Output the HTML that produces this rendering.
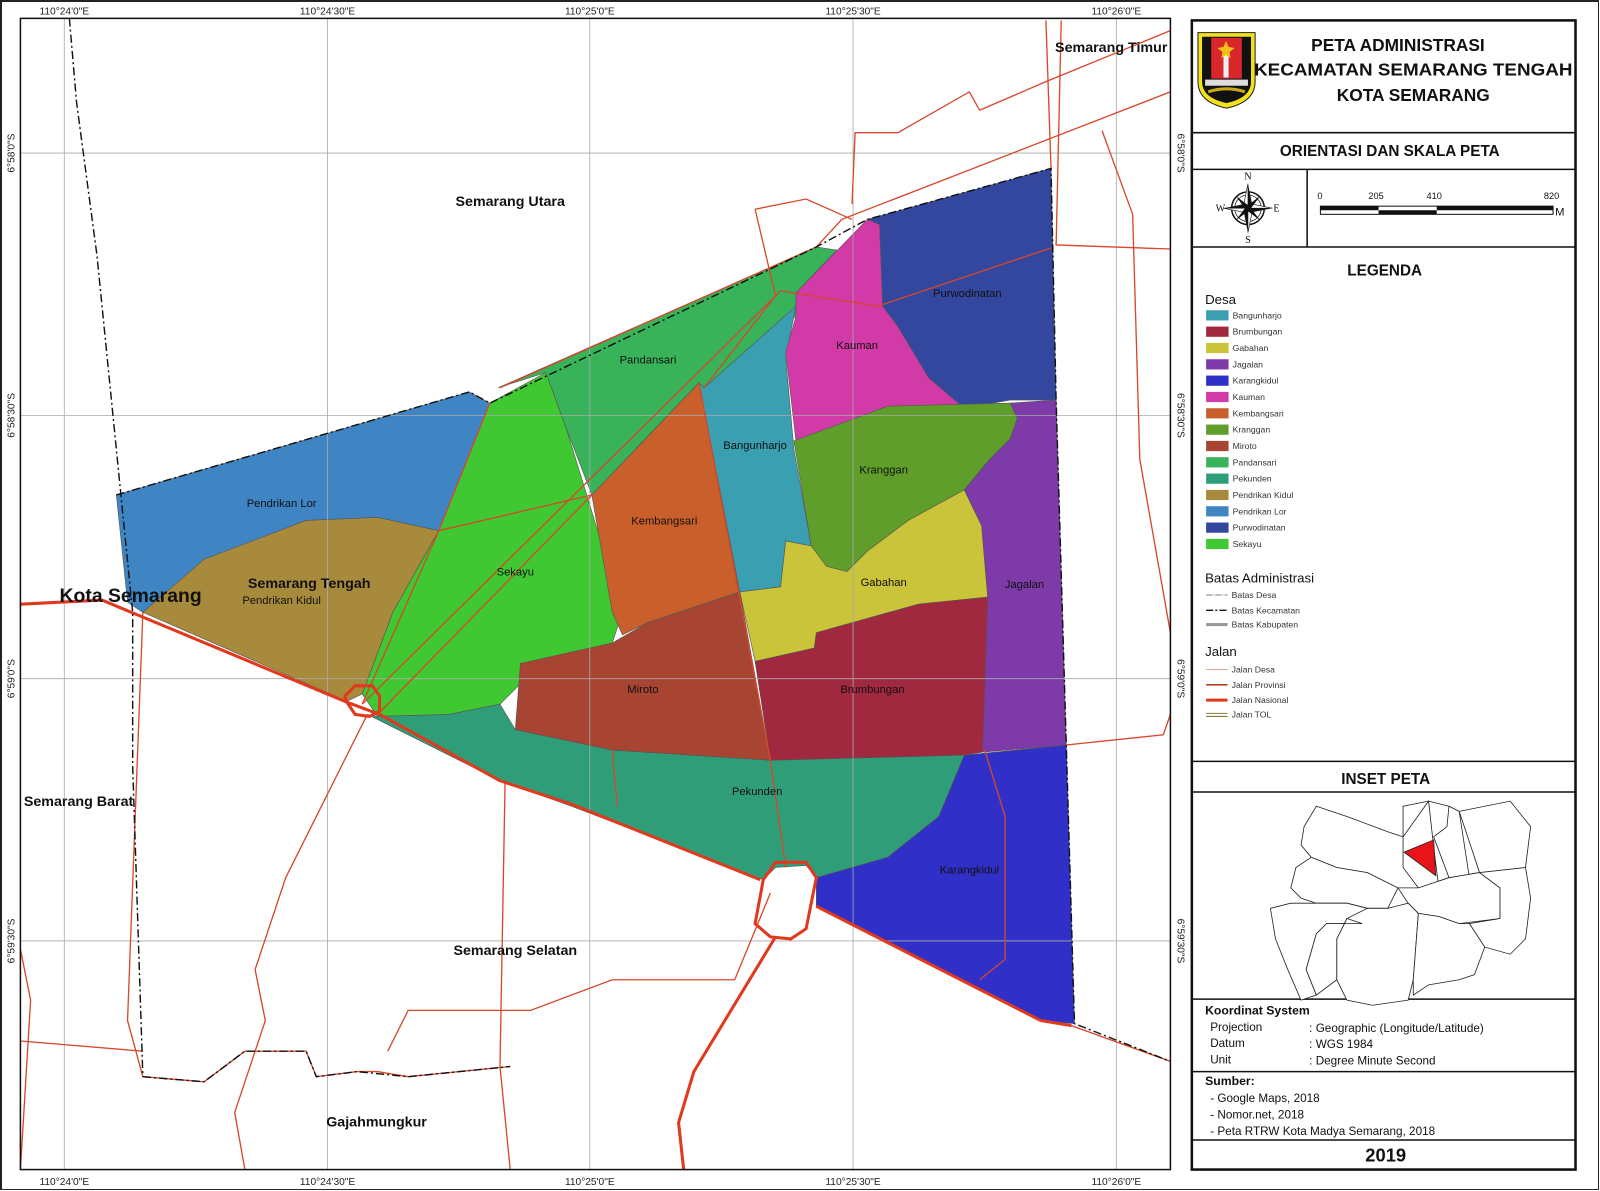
<!DOCTYPE html>
<html><head><meta charset="utf-8"><style>
html,body{margin:0;padding:0;background:#fff}
svg{display:block}
text{font-family:"Liberation Sans",sans-serif}
</style></head><body>
<svg width="1600" height="1191" viewBox="0 0 1568 1167" preserveAspectRatio="none" xmlns="http://www.w3.org/2000/svg">
<rect x="0" y="0" width="1568" height="1167" fill="#fff"/>
<rect x="1" y="1" width="1565" height="1164" fill="none" stroke="#222" stroke-width="2"/>
<g>
<polygon fill="#3f85c4" stroke="#555" stroke-width="0.6" points="114,485 460,384 480,395 430,520 370,507 300,510 200,550 140,600 125,590"/>
<polygon fill="#a88a3c" stroke="#555" stroke-width="0.6" points="140,600 200,548 300,510 370,507 430,520 385,600 355,680 340,687"/>
<polygon fill="#3fc832" stroke="#555" stroke-width="0.6" points="480,395 535,365 555,420 575,485 610,600 600,630 530,650 490,690 440,700 370,702 355,680 385,600 430,520"/>
<polygon fill="#38b35a" stroke="#555" stroke-width="0.6" points="488,380 800,242 820,245 780,287 780,310 690,380 685,375 580,485 555,420 535,365"/>
<polygon fill="#c95f2a" stroke="#555" stroke-width="0.6" points="580,485 685,375 725,580 635,610 610,622 600,600"/>
<polygon fill="#3a9fb0" stroke="#555" stroke-width="0.6" points="690,380 780,300 770,350 778,440 795,535 770,530 765,575 725,580 685,375"/>
<polygon fill="#d23aa8" stroke="#555" stroke-width="0.6" points="780,287 850,215 862,220 865,300 880,320 910,370 945,400 870,398 780,432 770,345 780,310"/>
<polygon fill="#33479e" stroke="#555" stroke-width="0.6" points="850,215 1030,165 1035,392 990,392 945,400 910,370 880,320 865,300 862,220"/>
<polygon fill="#5f9e2a" stroke="#555" stroke-width="0.6" points="778,432 870,398 990,395 997,410 990,430 970,450 945,480 890,510 850,540 830,560 810,555 795,535"/>
<polygon fill="#c9c43a" stroke="#555" stroke-width="0.6" points="770,530 795,535 810,555 830,560 850,540 890,510 945,480 962,515 968,585 900,592 800,620 798,635 740,648 725,580 765,575"/>
<polygon fill="#7d3aa8" stroke="#555" stroke-width="0.6" points="945,480 970,450 990,430 997,410 990,395 1035,392 1045,730 963,737 968,585 962,515"/>
<polygon fill="#a0283f" stroke="#555" stroke-width="0.6" points="740,648 798,635 800,620 900,592 968,585 963,737 945,740 755,745"/>
<polygon fill="#a84432" stroke="#555" stroke-width="0.6" points="510,650 600,630 635,610 725,580 755,745 600,735 505,715"/>
<polygon fill="#2f9e78" stroke="#555" stroke-width="0.6" points="370,702 440,700 490,690 505,715 600,735 755,745 945,740 920,800 870,840 800,860 790,848 760,850 748,862 560,790 490,765 360,700"/>
<polygon fill="#3030c8" stroke="#555" stroke-width="0.6" points="945,740 1045,730 1053,1003 1020,1000 800,888 800,860 870,840 920,800"/>

<g stroke="#aaa" stroke-width="0.8">
<line x1="63" y1="18" x2="63" y2="1146"/><line x1="321" y1="18" x2="321" y2="1146"/>
<line x1="578" y1="18" x2="578" y2="1146"/><line x1="836" y1="18" x2="836" y2="1146"/>
<line x1="1094" y1="18" x2="1094" y2="1146"/>
<line x1="20" y1="150" x2="1147" y2="150"/><line x1="20" y1="407" x2="1147" y2="407"/>
<line x1="20" y1="665" x2="1147" y2="665"/><line x1="20" y1="922" x2="1147" y2="922"/>
</g>

<g fill="none" stroke="#d6472b" stroke-width="1.3">
<path d="M490,380 L800,242 M800,242 L825,215 L1147,90"/>
<path d="M960,108 L1025,80 L1147,30 M960,108 L950,90 L880,130 L838,130 L835,200"/>
<path d="M740,205 L760,290 L690,380 M740,205 L790,195 L835,215"/>
<path d="M1080,128 L1110,210 L1117,450 L1147,620"/>
<path d="M1025,20 L1030,165 M1040,20 L1035,240 L1147,244"/>
<path d="M765,285 L860,300 L1030,243"/>
<path d="M685,375 L755,745 L770,850"/>
<path d="M355,690 L765,285"/>
<path d="M580,485 L370,700 M430,520 L580,485 M480,395 L430,520 L355,690"/>
<path d="M140,600 L125,1000 L140,1055 L200,1060 L240,1030 L300,1030 L310,1055 L350,1050 L370,1050 L400,1055 L500,1045"/>
<path d="M360,700 L280,860 L250,950 L260,1000 L230,1090 L240,1146"/>
<path d="M495,765 L490,1045 L500,1146"/>
<path d="M755,875 L720,960 L600,960 L520,990 L400,990 L380,1030"/>
<path d="M965,735 L985,800 L985,940 L960,960"/>
<path d="M1050,1005 L1147,1040 M1045,730 L1140,720 L1147,700"/>
<path d="M20,1020 L140,1030 M20,930 L30,980 L20,1146"/>
<path d="M600,735 L605,790"/>
</g>
<g fill="none" stroke="#e0391e" stroke-width="3">
<path d="M20,592 L100,588 L340,688 L372,700 L490,765 L560,788 L745,862"/>
<path d="M340,688 L338,682 L348,672 L365,672 L372,682 L372,697 L362,702 L348,700 Z"/>
<path d="M760,845 L790,845 L800,860 L790,910 L775,920 L755,918 L740,905 L748,862 Z"/>
<path d="M800,888 L1020,1000 L1050,1005"/>
<path d="M760,918 L680,1050 L665,1100 L670,1146"/>
</g>
<g fill="none" stroke="#111" stroke-width="1.4" stroke-dasharray="8,3,2,3">
<path d="M68,18 L75,100 L95,250 L118,480 L130,600 L130,750 L140,1055"/>
<path d="M114,485 L460,384 L480,395 L800,242 L850,215 L1030,165 L1035,392 L1053,1003 L1147,1040"/>
<path d="M140,1055 L200,1060 L240,1030 L300,1030 L310,1055 L350,1050 L400,1055 L500,1045"/>
</g>

<g font-size="11" fill="#111" text-anchor="middle">
<text x="276" y="497">Pendrikan Lor</text>
<text x="276" y="592">Pendrikan Kidul</text>
<text x="505" y="564">Sekayu</text>
<text x="635" y="356">Pandansari</text>
<text x="651" y="514">Kembangsari</text>
<text x="740" y="440">Bangunharjo</text>
<text x="840" y="342">Kauman</text>
<text x="948" y="291">Purwodinatan</text>
<text x="866" y="464">Kranggan</text>
<text x="866" y="574">Gabahan</text>
<text x="1004" y="576">Jagalan</text>
<text x="630" y="679">Miroto</text>
<text x="855" y="679">Brumbungan</text>
<text x="742" y="779">Pekunden</text>
<text x="950" y="856">Karangkidul</text>
</g>
<g font-size="14" font-weight="bold" fill="#111" text-anchor="middle">
<text x="500" y="202">Semarang Utara</text>
<text x="1089" y="51">Semarang Timur</text>
<text x="303" y="576">Semarang Tengah</text>
<text x="77" y="790">Semarang Barat</text>
<text x="505" y="936">Semarang Selatan</text>
<text x="369" y="1104">Gajahmungkur</text>
</g>
<text x="128" y="590" font-size="19" font-weight="bold" fill="#111" text-anchor="middle">Kota Semarang</text>
</g>
<path fill="#fff" fill-rule="evenodd" d="M2,2 H1566 V1165 H2 Z M20,18 H1147 V1146 H20 Z"/>
<rect x="20" y="18" width="1127" height="1128" fill="none" stroke="#111" stroke-width="1.5"/>
<g font-size="10" fill="#222" text-anchor="middle">
<text x="63" y="14">110°24'0"E</text><text x="321" y="14">110°24'30"E</text>
<text x="578" y="14">110°25'0"E</text><text x="836" y="14">110°25'30"E</text><text x="1094" y="14">110°26'0"E</text>
<text x="63" y="1161">110°24'0"E</text><text x="321" y="1161">110°24'30"E</text>
<text x="578" y="1161">110°25'0"E</text><text x="836" y="1161">110°25'30"E</text><text x="1094" y="1161">110°26'0"E</text>
<text transform="translate(14,150) rotate(-90)">6°58'0"S</text>
<text transform="translate(14,407) rotate(-90)">6°58'30"S</text>
<text transform="translate(14,665) rotate(-90)">6°59'0"S</text>
<text transform="translate(14,922) rotate(-90)">6°59'30"S</text>
<text transform="translate(1154,150) rotate(90)">6°58'0"S</text>
<text transform="translate(1154,407) rotate(90)">6°58'30"S</text>
<text transform="translate(1154,665) rotate(90)">6°59'0"S</text>
<text transform="translate(1154,922) rotate(90)">6°59'30"S</text>
</g>

<rect x="1168" y="20" width="376" height="1126" fill="#fff" stroke="#111" stroke-width="2.5"/>
<g stroke="#111" stroke-width="1.5">
<line x1="1168" y1="130" x2="1544" y2="130"/>
<line x1="1168" y1="166" x2="1544" y2="166"/>
<line x1="1281" y1="166" x2="1281" y2="242"/>
<line x1="1168" y1="242" x2="1544" y2="242"/>
<line x1="1168" y1="746" x2="1544" y2="746"/>
<line x1="1168" y1="776" x2="1544" y2="776"/>
<line x1="1168" y1="979" x2="1544" y2="979"/>
<line x1="1168" y1="1050" x2="1544" y2="1050"/>
<line x1="1168" y1="1117" x2="1544" y2="1117"/>
</g>
<path d="M1174,32 H1230 V80 Q1230,100 1202,106 Q1174,100 1174,80 Z" fill="#f2e21a" stroke="#222" stroke-width="1"/>
<path d="M1178,36 H1226 V80 Q1226,96 1202,101 Q1178,96 1178,80 Z" fill="#111"/>
<rect x="1187" y="37" width="30" height="40" fill="#d8262b"/>
<rect x="1199" y="52" width="5" height="24" fill="#eee"/>
<polygon points="1201.5,40 1204,46 1210,47 1205,51 1206,57 1201.5,54 1197,57 1198,51 1193,47 1199,46" fill="#f2c21a"/>
<rect x="1181" y="78" width="42" height="6" fill="#ddd"/>
<path d="M1184,90 Q1202,84 1220,90" stroke="#c9a81a" stroke-width="3" fill="none"/>
<g font-weight="bold" font-size="17" fill="#111" text-anchor="middle">
<text x="1370" y="50">PETA ADMINISTRASI</text>
<text x="1385" y="74" textLength="312" lengthAdjust="spacingAndGlyphs">KECAMATAN SEMARANG TENGAH</text>
<text x="1385" y="99">KOTA SEMARANG</text>
<text x="1362" y="153" font-size="15">ORIENTASI DAN SKALA PETA</text>
<text x="1357" y="270" font-size="15">LEGENDA</text>
<text x="1358" y="768" font-size="15">INSET PETA</text>
<text x="1358" y="1138" font-size="18">2019</text>
</g>
<g transform="translate(1223,204)">
<circle r="16" fill="none" stroke="#111" stroke-width="1.5"/>
<circle r="13" fill="none" stroke="#111" stroke-width="0.7"/>
<polygon points="0,-24 4,-4 0,0" fill="#111"/><polygon points="0,-24 -4,-4 0,0" fill="#fff" stroke="#111" stroke-width="0.6"/>
<polygon points="0,24 -4,4 0,0" fill="#111"/><polygon points="0,24 4,4 0,0" fill="#fff" stroke="#111" stroke-width="0.6"/>
<polygon points="24,0 4,4 0,0" fill="#111"/><polygon points="24,0 4,-4 0,0" fill="#fff" stroke="#111" stroke-width="0.6"/>
<polygon points="-24,0 -4,-4 0,0" fill="#111"/><polygon points="-24,0 -4,4 0,0" fill="#fff" stroke="#111" stroke-width="0.6"/>
<polygon points="12,-12 3,0 0,0 0,-3" fill="#111"/><polygon points="-12,12 -3,0 0,0 0,3" fill="#111"/>
<polygon points="12,12 0,3 0,0 3,0" fill="#111"/><polygon points="-12,-12 0,-3 0,0 -3,0" fill="#111"/>
<g font-size="10" text-anchor="middle" fill="#111">
<text x="0" y="-28" style="font-family:'Liberation Serif',serif">N</text>
<text x="0" y="34" style="font-family:'Liberation Serif',serif">S</text>
<text x="-27" y="3" style="font-family:'Liberation Serif',serif">W</text>
<text x="28" y="3" style="font-family:'Liberation Serif',serif">E</text>
</g></g>
<g font-size="9" fill="#111">
<text x="1291" y="195">0</text><text x="1341" y="195">205</text><text x="1398" y="195">410</text><text x="1513" y="195">820</text>
<text x="1524" y="211" font-size="11">M</text>
</g>
<rect x="1294" y="202" width="228" height="8" fill="#fff" stroke="#111" stroke-width="1"/>
<rect x="1294" y="202" width="57" height="4" fill="#111"/>
<rect x="1351" y="206" width="57" height="4" fill="#111"/>
<rect x="1408" y="202" width="114" height="4" fill="#111"/>
<text x="1181" y="298" font-size="13" fill="#111">Desa</text>
<g font-size="8.5" fill="#333">
<rect x="1182" y="304" width="22" height="10" fill="#3a9fb0"/><text x="1208" y="312">Bangunharjo</text>
<rect x="1182" y="320" width="22" height="10" fill="#a0283f"/><text x="1208" y="328">Brumbungan</text>
<rect x="1182" y="336" width="22" height="10" fill="#c9c43a"/><text x="1208" y="344">Gabahan</text>
<rect x="1182" y="352" width="22" height="10" fill="#7d3aa8"/><text x="1208" y="360">Jagalan</text>
<rect x="1182" y="368" width="22" height="10" fill="#3030c8"/><text x="1208" y="376">Karangkidul</text>
<rect x="1182" y="384" width="22" height="10" fill="#d23aa8"/><text x="1208" y="392">Kauman</text>
<rect x="1182" y="400" width="22" height="10" fill="#c95f2a"/><text x="1208" y="408">Kembangsari</text>
<rect x="1182" y="416" width="22" height="10" fill="#5f9e2a"/><text x="1208" y="424">Kranggan</text>
<rect x="1182" y="432" width="22" height="10" fill="#a84432"/><text x="1208" y="440">Miroto</text>
<rect x="1182" y="448" width="22" height="10" fill="#38b35a"/><text x="1208" y="456">Pandansari</text>
<rect x="1182" y="464" width="22" height="10" fill="#2f9e78"/><text x="1208" y="472">Pekunden</text>
<rect x="1182" y="480" width="22" height="10" fill="#a88a3c"/><text x="1208" y="488">Pendrikan Kidul</text>
<rect x="1182" y="496" width="22" height="10" fill="#3f85c4"/><text x="1208" y="504">Pendrikan Lor</text>
<rect x="1182" y="512" width="22" height="10" fill="#33479e"/><text x="1208" y="520">Purwodinatan</text>
<rect x="1182" y="528" width="22" height="10" fill="#3fc832"/><text x="1208" y="536">Sekayu</text>
</g>
<text x="1181" y="571" font-size="13" fill="#111">Batas Administrasi</text>
<g font-size="8.5" fill="#333">
<line x1="1182" y1="583" x2="1203" y2="583" stroke="#555" stroke-width="0.7" stroke-dasharray="6,1,1,1"/><text x="1207" y="586">Batas Desa</text>
<line x1="1182" y1="598" x2="1203" y2="598" stroke="#111" stroke-width="1.4" stroke-dasharray="7,2,2,2"/><text x="1207" y="601">Batas Kecamatan</text>
<line x1="1182" y1="612" x2="1203" y2="612" stroke="#999" stroke-width="3"/><text x="1207" y="615">Batas Kabupaten</text>
</g>
<text x="1181" y="643" font-size="13" fill="#111">Jalan</text>
<g font-size="8.5" fill="#333">
<line x1="1182" y1="656" x2="1203" y2="656" stroke="#e0a090" stroke-width="1"/><text x="1207" y="659">Jalan Desa</text>
<line x1="1182" y1="671" x2="1203" y2="671" stroke="#b04020" stroke-width="1.5"/><text x="1207" y="674">Jalan Provinsi</text>
<line x1="1182" y1="686" x2="1203" y2="686" stroke="#e0391e" stroke-width="3"/><text x="1207" y="689">Jalan Nasional</text>
<line x1="1182" y1="699" x2="1203" y2="699" stroke="#8a7a3a" stroke-width="1"/><line x1="1182" y1="702" x2="1203" y2="702" stroke="#8a7a3a" stroke-width="1"/><text x="1207" y="703">Jalan TOL</text>
</g>
<g fill="#fff" stroke="#222" stroke-width="0.8">
<path d="M1290,790 L1320,800 L1360,815 L1375,820 L1375,790 L1400,785 L1420,790 L1440,800 L1450,810 L1445,840 L1450,855 L1420,860 L1390,870 L1370,870 L1340,855 L1310,850 L1285,840 L1275,828 L1278,810 Z"/>
<path d="M1375,820 L1400,785 L1405,830 L1410,870 L1390,870 L1375,850 Z"/>
<path d="M1405,820 L1418,810 L1420,790 L1430,795 L1440,860 L1420,860 Z"/>
<path d="M1430,795 L1480,785 L1500,810 L1495,850 L1470,870 L1450,855 Z"/>
<path d="M1285,840 L1310,850 L1340,855 L1370,870 L1360,890 L1340,890 L1320,885 L1290,885 L1275,880 L1265,870 L1270,850 Z"/>
<path d="M1370,870 L1390,870 L1420,860 L1450,855 L1470,870 L1470,900 L1430,905 L1410,898 L1390,895 L1380,885 Z"/>
<path d="M1450,855 L1495,850 L1500,880 L1495,920 L1480,935 L1455,928 L1440,905 L1470,900 L1470,870 Z"/>
<path d="M1265,885 L1290,885 L1320,885 L1340,890 L1335,905 L1300,905 L1290,915 L1280,950 L1290,975 L1275,980 L1262,950 L1250,920 L1245,890 Z"/>
<path d="M1340,890 L1360,890 L1380,885 L1390,895 L1385,960 L1380,980 L1345,985 L1320,980 L1310,960 L1310,920 L1320,900 Z"/>
<path d="M1390,895 L1410,898 L1430,905 L1440,905 L1455,928 L1445,955 L1430,960 L1400,965 L1385,975 L1385,960 Z"/>
<path d="M1300,905 L1335,905 L1320,900 L1310,920 L1310,960 L1290,975 L1280,950 L1290,915 Z"/>
</g>
<polygon points="1376,835 1405,823 1407,858" fill="#e8141a" stroke="#222" stroke-width="0.8"/>
<g fill="#111">
<text x="1181" y="994" font-size="12" font-weight="bold">Koordinat System</text>
<g font-size="11.5">
<text x="1186" y="1010">Projection</text><text x="1283" y="1011">: Geographic (Longitude/Latitude)</text>
<text x="1186" y="1026">Datum</text><text x="1283" y="1027">: WGS 1984</text>
<text x="1186" y="1042">Unit</text><text x="1283" y="1043">: Degree Minute Second</text>
</g>
<text x="1181" y="1063" font-size="12" font-weight="bold">Sumber:</text>
<g font-size="11.5">
<text x="1186" y="1080">-  Google Maps, 2018</text>
<text x="1186" y="1096">-  Nomor.net, 2018</text>
<text x="1186" y="1112">-  Peta RTRW Kota Madya Semarang, 2018</text>
</g></g>
</svg>
</body></html>
